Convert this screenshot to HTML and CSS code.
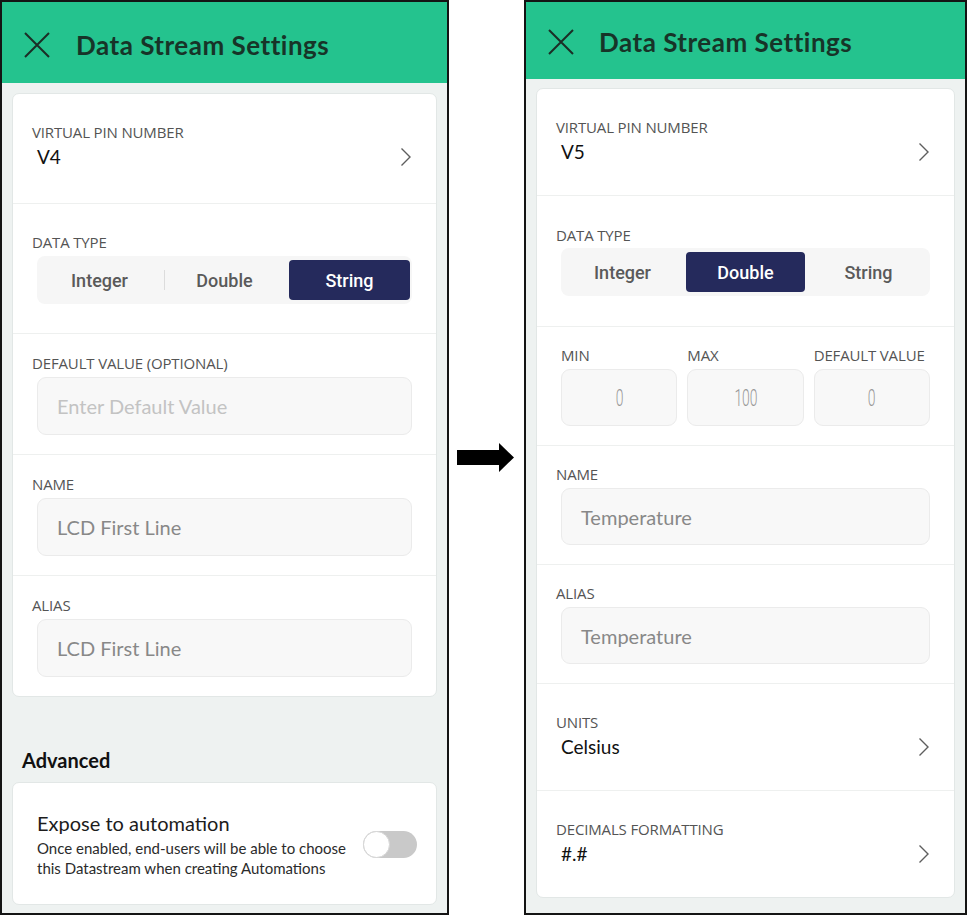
FILE: index.html
```html
<!DOCTYPE html>
<html lang="en">
<head>
<meta charset="utf-8">
<title>Data Stream Settings</title>
<link rel="stylesheet" href="styles.css">
</head>
<body>
<div class="page">
  <section class="phone phone--left">
    <header class="appbar">
      <svg class="close" width="26" height="26" viewBox="0 0 26 26"><path d="M1 1 L25 25 M25 1 L1 25"/></svg>
      <h1 class="title">Data Stream Settings</h1>
    </header>
    <div class="content">
      <div class="card">
        <div class="sec sec--select">
          <div class="label">VIRTUAL PIN NUMBER</div>
          <div class="select-row"><span class="value">V4</span><svg class="chev" width="12" height="20" viewBox="0 0 12 20"><path d="M1.5 1.5 L10 10 L1.5 18.5"/></svg></div>
        </div>
        <div class="sec sec--type">
          <div class="label">DATA TYPE</div>
          <div class="segmented">
            <span class="seg">Integer</span>
            <span class="seg seg--sep">Double</span>
            <span class="seg seg--active">String</span>
          </div>
        </div>
        <div class="sec sec--field">
          <div class="label">DEFAULT VALUE (OPTIONAL)</div>
          <div class="input input--placeholder">Enter Default Value</div>
        </div>
        <div class="sec sec--field">
          <div class="label">NAME</div>
          <div class="input">LCD First Line</div>
        </div>
        <div class="sec sec--field">
          <div class="label">ALIAS</div>
          <div class="input">LCD First Line</div>
        </div>
      </div>
      <h2 class="advanced">Advanced</h2>
      <div class="card card--toggle">
        <div class="toggle-text">
          <div class="toggle-title">Expose to automation</div>
          <div class="toggle-desc">Once enabled, end-users will be able to choose<br>this Datastream when creating Automations</div>
        </div>
        <span class="toggle"></span>
      </div>
    </div>
  </section>

  <div class="arrow-col">
    <svg class="arrow" width="57" height="29" viewBox="0 0 57 29"><polygon points="0,7 42,7 42,0 57,14.5 42,29 42,22 0,22"/></svg>
  </div>

  <section class="phone phone--right">
    <header class="appbar">
      <svg class="close" width="26" height="26" viewBox="0 0 26 26"><path d="M1 1 L25 25 M25 1 L1 25"/></svg>
      <h1 class="title">Data Stream Settings</h1>
    </header>
    <div class="content">
      <div class="card">
        <div class="sec sec--select">
          <div class="label">VIRTUAL PIN NUMBER</div>
          <div class="select-row"><span class="value">V5</span><svg class="chev" width="12" height="20" viewBox="0 0 12 20"><path d="M1.5 1.5 L10 10 L1.5 18.5"/></svg></div>
        </div>
        <div class="sec sec--type">
          <div class="label">DATA TYPE</div>
          <div class="segmented">
            <span class="seg">Integer</span>
            <span class="seg seg--active">Double</span>
            <span class="seg">String</span>
          </div>
        </div>
        <div class="sec sec--field">
          <div class="range">
            <div class="range-col">
              <div class="label label--flush">MIN</div>
              <div class="input input--num"><span class="num">0</span></div>
            </div>
            <div class="range-col">
              <div class="label label--flush">MAX</div>
              <div class="input input--num"><span class="num">100</span></div>
            </div>
            <div class="range-col">
              <div class="label label--flush">DEFAULT VALUE</div>
              <div class="input input--num"><span class="num">0</span></div>
            </div>
          </div>
        </div>
        <div class="sec sec--field">
          <div class="label">NAME</div>
          <div class="input">Temperature</div>
        </div>
        <div class="sec sec--field">
          <div class="label">ALIAS</div>
          <div class="input">Temperature</div>
        </div>
        <div class="sec sec--select">
          <div class="label">UNITS</div>
          <div class="select-row"><span class="value">Celsius</span><svg class="chev" width="12" height="20" viewBox="0 0 12 20"><path d="M1.5 1.5 L10 10 L1.5 18.5"/></svg></div>
        </div>
        <div class="sec sec--select">
          <div class="label">DECIMALS FORMATTING</div>
          <div class="select-row"><span class="value">#.#</span><svg class="chev" width="12" height="20" viewBox="0 0 12 20"><path d="M1.5 1.5 L10 10 L1.5 18.5"/></svg></div>
        </div>
      </div>
    </div>
  </section>
</div>
</body>
</html>
```

FILE: styles.css
```css
html, body {
  margin: 0;
  padding: 0;
  background: #ffffff;
}

body {
  font-family: "Lato", "Noto Sans", sans-serif;
  color: #111;
}

.page {
  display: flex;
  align-items: stretch;
  width: 967px;
  height: 915px;
}

.phone {
  box-sizing: border-box;
  height: 915px;
  border: 2px solid #141414;
  background: #eef2f1;
  display: flex;
  flex-direction: column;
  overflow: hidden;

  --appbar-h: 81px;
  --appbar-pt: 5px;
  --title-gap: 26px;
  --content-pt: 10px;
  --sel-pb: 34px;
  --type-pt: 30px;
  --type-mt: 6px;
  --type-pb: 29px;
  --field-pt: 21px;
  --field-pb: 19px;
  --input-h: 58px;
}

.phone--left {
  width: 449px;
}

.phone--right {
  width: 443px;
  --appbar-h: 77px;
  --appbar-pt: 3px;
  --title-gap: 25px;
  --content-pt: 9px;
  --sel-pb: 31px;
  --type-pt: 31px;
  --type-mt: 5px;
  --type-pb: 30px;
  --field-pt: 20px;
  --field-pb: 19px;
  --input-h: 57px;
}

/* App bar */
.appbar {
  box-sizing: border-box;
  height: var(--appbar-h);
  flex: 0 0 auto;
  background: #24c38e;
  display: flex;
  align-items: center;
  padding: var(--appbar-pt) 0 0 22px;
  gap: var(--title-gap);
}

.close path {
  fill: none;
  stroke: #1b2e26;
  stroke-width: 2;
}

.title {
  margin: 0;
  font-family: "Lato", sans-serif;
  font-weight: 700;
  font-size: 26px;
  line-height: 30px;
  color: #173428;
  letter-spacing: 0.5px;
}

/* Content */
.content {
  flex: 1 1 auto;
  padding: var(--content-pt) 10px 0 10px;
}

.card {
  background: #ffffff;
  border: 1px solid #e2e7e6;
  border-radius: 7px;
}

.sec {
  padding: 0 24px;
  border-top: 1px solid #eef0ef;
}

.sec:first-child {
  border-top: none;
}

.label {
  font-family: "Open Sans", sans-serif;
  font-size: 15px;
  line-height: 16px;
  color: #545454;
  margin-left: -5px;
  letter-spacing: -0.15px;
  white-space: nowrap;
}

.label--flush {
  margin-left: 0;
}

/* Select rows */
.sec--select {
  padding-top: 30px;
  padding-bottom: var(--sel-pb);
}

.select-row {
  margin-top: 5px;
  height: 24px;
  display: flex;
  align-items: center;
  justify-content: space-between;
}

.value {
  font-size: 19px;
  line-height: 24px;
  color: #111;
}

.chev path {
  fill: none;
  stroke: #5e5e5e;
  stroke-width: 1.4;
}

/* Data type */
.sec--type {
  padding-top: var(--type-pt);
  padding-bottom: var(--type-pb);
}

.segmented {
  box-sizing: border-box;
  margin-top: var(--type-mt);
  height: 48px;
  background: #f6f6f6;
  border-radius: 8px;
  padding: 4px 0;
  display: flex;
}

.seg {
  flex: 1 1 0;
  margin: 0 2px;
  display: flex;
  align-items: center;
  justify-content: center;
  font-family: "Roboto", sans-serif;
  font-weight: 500;
  font-size: 18px;
  color: #5a5a5a;
  border-radius: 4px;
  position: relative;
}

.seg--sep::before {
  content: "";
  position: absolute;
  left: 0;
  top: 10px;
  height: 20px;
  width: 1px;
  background: #dcdcdc;
}

.seg--active {
  background: #252a5c;
  color: #ffffff;
}

/* Fields */
.sec--field {
  padding-top: var(--field-pt);
  padding-bottom: var(--field-pb);
}

.input {
  box-sizing: border-box;
  margin-top: 6px;
  height: var(--input-h);
  background: #f8f8f8;
  border: 1px solid #ebebeb;
  border-radius: 9px;
  padding: 0 19px;
  display: flex;
  align-items: center;
  font-size: 20px;
  color: #888;
}

.input--placeholder {
  color: #c3c3c3;
}

.range {
  display: grid;
  grid-template-columns: 1fr 1fr 1fr;
  column-gap: 10px;
}

.input--num {
  justify-content: center;
  padding: 0;
}

.num {
  display: inline-block;
  font-family: "Roboto", sans-serif;
  font-weight: 300;
  font-size: 24px;
  color: #999;
  transform: scaleX(0.58);
}

/* Advanced */
.advanced {
  margin: 51px 0 10px 10px;
  font-family: "Lato", sans-serif;
  font-weight: 700;
  font-size: 20px;
  line-height: 24px;
  color: #111;
}

.card--toggle {
  display: flex;
  align-items: center;
  padding: 28px 19px 26px 24px;
}

.toggle-text {
  flex: 1 1 auto;
}

.toggle-title {
  font-size: 20px;
  line-height: 24px;
  color: #1c1c1c;
}

.toggle-desc {
  margin-top: 3px;
  font-size: 15px;
  line-height: 20px;
  color: #2b2b2b;
  white-space: nowrap;
}

.toggle {
  flex: 0 0 auto;
  width: 54px;
  height: 27px;
  border-radius: 14px;
  background: #c9c9c9;
  position: relative;
}

.toggle::before {
  content: "";
  position: absolute;
  left: 0;
  top: 0;
  box-sizing: border-box;
  width: 27px;
  height: 27px;
  border-radius: 50%;
  background: #ffffff;
  border: 1px solid #d6d6d6;
}

/* Arrow column */
.arrow-col {
  width: 75px;
  flex: 0 0 75px;
  display: flex;
  align-items: center;
  padding-left: 8px;
  box-sizing: border-box;
}

.arrow polygon {
  fill: #000;
}
```
